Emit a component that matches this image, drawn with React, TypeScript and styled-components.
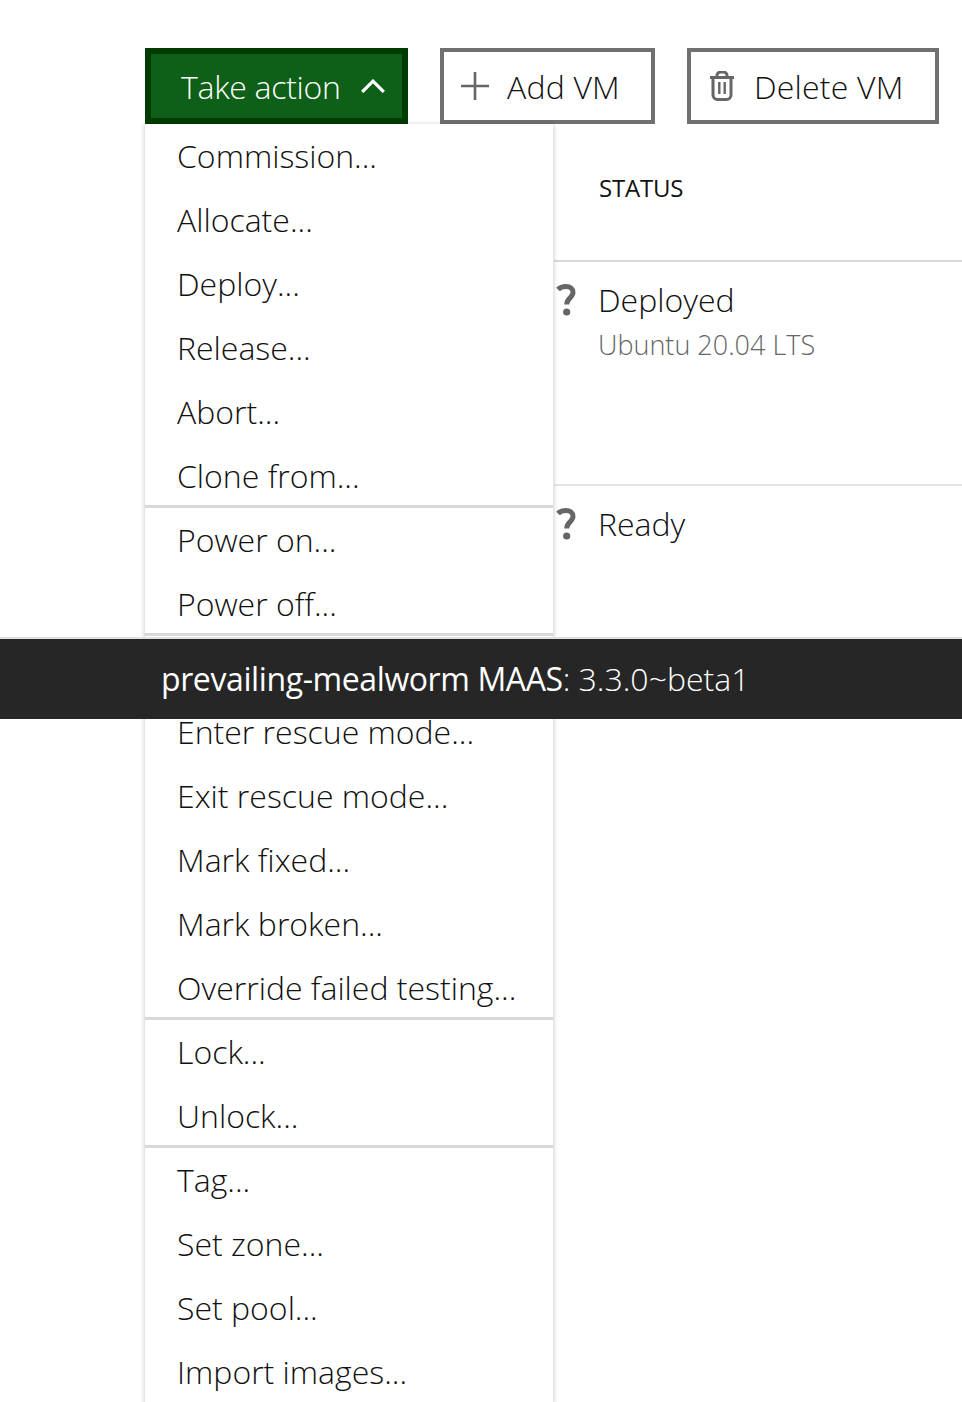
import React from "react";
import styled, { createGlobalStyle } from "styled-components";

const Global = createGlobalStyle`
  html, body { margin: 0; padding: 0; background: #fff; }
  body { font-family: "Open Sans", "Noto Sans", sans-serif; color: #111; }
`;

const Page = styled.div`
  position: relative;
  width: 962px;
  height: 1402px;
  overflow: hidden;
  background: #fff;
`;

const Toolbar = styled.div`
  display: flex;
  gap: 32px;
  padding: 48px 0 0 145px;
  height: 76px;
`;

const ActionButton = styled.button`
  display: flex;
  align-items: center;
  gap: 20px;
  width: 263px;
  height: 76px;
  box-sizing: border-box;
  border: 6px solid #003b00;
  background: #0e5f17;
  color: #fff;
  font: 300 32px "Open Sans", sans-serif;
  letter-spacing: -0.3px;
  padding: 0 0 0 30px;
`;

const GhostButton = styled.button<{ $w: number; $pad: number; $gap: number }>`
  display: flex;
  align-items: center;
  gap: ${(p) => p.$gap}px;
  width: ${(p) => p.$w}px;
  height: 76px;
  box-sizing: border-box;
  border: 4px solid #707070;
  background: #fff;
  color: #111;
  font: 300 32px "Open Sans", sans-serif;
  letter-spacing: 0.2px;
  padding: 0 0 0 ${(p) => p.$pad}px;
`;

const Table = styled.div`
  margin-left: 554px;
  color: #111;
`;

const HeadRow = styled.div`
  height: 138px;
  box-sizing: border-box;
  padding: 49px 0 0 45px;
  border-bottom: 2px solid #d9d9d9;
  font: 400 24px/30px "Open Sans", sans-serif;
  letter-spacing: -0.2px;
`;

const Row = styled.div`
  display: flex;
  height: 224px;
  box-sizing: border-box;
  border-bottom: 2px solid #e5e5e5;
  padding: 18px 0 0 2px;
`;

const StatusIcon = styled.svg`
  width: 20px;
  height: 32px;
  margin-top: 4px;
  flex: none;
`;

const StatusText = styled.div`
  margin-left: 22px;
`;

const StatusName = styled.div`
  font: 300 32px/40px "Open Sans", sans-serif;
`;

const StatusSub = styled.div`
  font: 300 27px/50px "Open Sans", sans-serif;
  color: #666;
`;

const Menu = styled.div`
  position: absolute;
  left: 145px;
  top: 124px;
  width: 408px;
  background: #fff;
  border-radius: 2px;
  box-shadow: 0 1px 4px 1px rgba(0, 0, 0, 0.18);
`;

const MenuGroup = styled.div`
  box-shadow: inset 0 -3px 0 #d9d9d9;
  &:last-child { box-shadow: none; }
`;

const MenuItem = styled.div`
  height: 64px;
  line-height: 64px;
  padding-left: 32px;
  font-size: 32px;
  font-weight: 300;
  color: #111;
  white-space: nowrap;
`;

const Footer = styled.div`
  position: absolute;
  left: 0;
  right: 0;
  top: 637px;
  height: 82px;
  box-sizing: border-box;
  border-top: 2px solid #e0e0e0;
  background: #262626;
  color: #fff;
  padding-left: 161px;
  font-size: 32px;
  line-height: 80px;
  white-space: nowrap;
`;

const FooterName = styled.span`
  letter-spacing: -0.4px;
`;

const FooterVersion = styled.span`
  font-weight: 300;
`;

const groups = [
  ["Commission...", "Allocate...", "Deploy...", "Release...", "Abort...", "Clone from..."],
  ["Power on...", "Power off..."],
  ["", "Enter rescue mode...", "Exit rescue mode...", "Mark fixed...", "Mark broken...", "Override failed testing..."],
  ["Lock...", "Unlock..."],
  ["Tag...", "Set zone...", "Set pool...", "Import images..."],
];

const Question = () => (
  <StatusIcon viewBox="0 0 20 32">
    <path d="M2 5.5C4 3.4 7 2.5 10 2.5c4.4 0 7 2.4 7 5.8 0 5.6-6.3 5.6-6.3 12.2" fill="none" stroke="#666" strokeWidth="5" />
    <circle cx="10.7" cy="28" r="3.6" fill="#666" />
  </StatusIcon>
);

export default function App() {
  return (
    <Page>
      <Global />
      <Toolbar>
        <ActionButton>
          Take action
          <svg width="24" height="14" viewBox="0 0 24 14" fill="none">
            <path d="M1.2 13 12 2.2 22.8 13" stroke="#fff" strokeWidth="3.2" />
          </svg>
        </ActionButton>
        <GhostButton $w={215} $pad={17} $gap={18}>
          <svg width="28" height="28" viewBox="0 0 28 28" fill="none">
            <path d="M14 0v28M0 14h28" stroke="#666" strokeWidth="2.6" />
          </svg>
          Add VM
        </GhostButton>
        <GhostButton $w={252} $pad={19} $gap={20}>
          <svg width="24" height="30" viewBox="0 0 24 30" fill="none" stroke="#666" strokeWidth="3">
            <path d="M0 6.5h24M7 6.5V4.5A3.5 3.5 0 0 1 10.5 1h3A3.5 3.5 0 0 1 17 4.5v2M3 6.5V24a4.5 4.5 0 0 0 4.5 4.5h9A4.5 4.5 0 0 0 21 24V6.5" />
            <path d="M9.3 11v12M14.7 11v12" strokeWidth="2.4" />
          </svg>
          Delete VM
        </GhostButton>
      </Toolbar>
      <Table>
        <HeadRow>STATUS</HeadRow>
        <Row>
          <Question />
          <StatusText>
            <StatusName>Deployed</StatusName>
            <StatusSub>Ubuntu 20.04 LTS</StatusSub>
          </StatusText>
        </Row>
        <Row>
          <Question />
          <StatusText>
            <StatusName>Ready</StatusName>
          </StatusText>
        </Row>
      </Table>
      <Menu>
        {groups.map((g, i) => (
          <MenuGroup key={i}>
            {g.map((t, j) => (
              <MenuItem key={j}>{t}</MenuItem>
            ))}
          </MenuGroup>
        ))}
      </Menu>
      <Footer>
        <FooterName>prevailing-mealworm MAAS</FooterName>
        <FooterVersion>: 3.3.0~beta1</FooterVersion>
      </Footer>
    </Page>
  );
}
